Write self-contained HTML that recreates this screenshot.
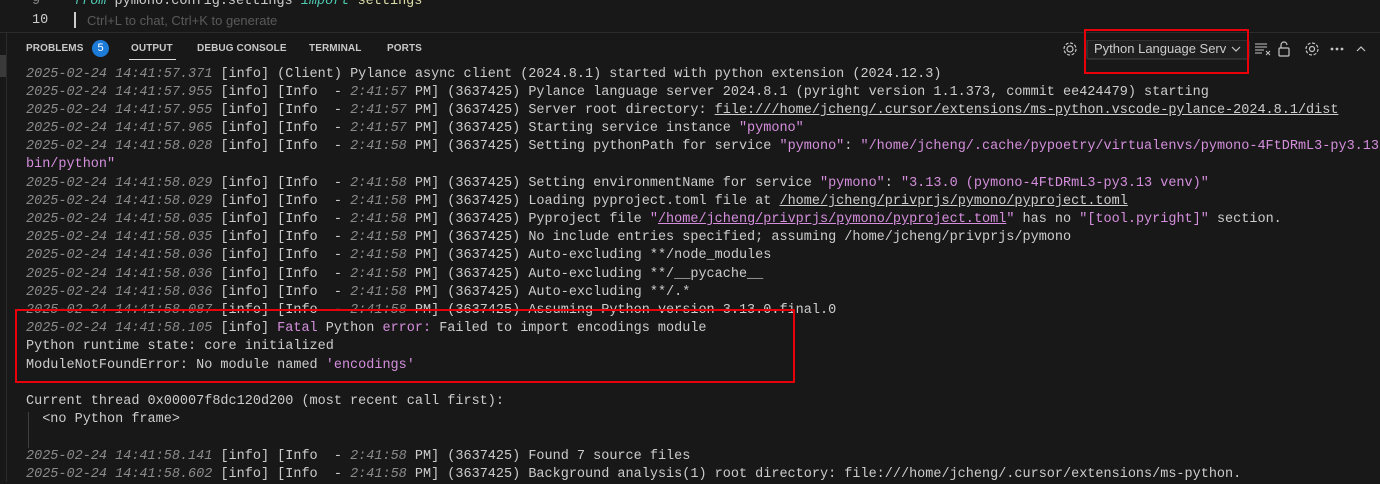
<!DOCTYPE html>
<html><head><meta charset="utf-8">
<style>
html,body{margin:0;padding:0;}
body{width:1380px;height:482px;background:#181818;overflow:hidden;position:relative;font-family:"Liberation Sans",sans-serif;}
.mono{font-family:"Liberation Mono","DejaVu Sans Mono",monospace;font-size:13.5px;color:#cccccc;white-space:pre;}
.ed{position:absolute;left:0;top:0;width:1380px;height:31px;background:#181818;}
.panel{position:absolute;left:0;top:32px;width:1380px;height:450px;border-top:1px solid #2b2b2b;}
.tab{position:absolute;top:43px;font-size:10px;font-weight:bold;color:#c8c8c8;letter-spacing:0.1px;}
.line{position:absolute;left:26px;height:18px;line-height:18px;}
.ts{color:#8b8b8b;font-style:italic;}
.s{color:#d48edc;}
.u{text-decoration:underline;}
.red{position:absolute;border:2px solid #e8000b;box-sizing:border-box;}
</style></head><body>
<div class="ed">
 <div class="mono" style="position:absolute;left:32px;top:-6px;color:#858585;">9</div>
 <div class="mono" style="position:absolute;left:74px;top:-6px;"><span style="color:#4ec9b0;font-style:italic">from</span> pymono.config.settings <span style="color:#4ec9b0;font-style:italic">import</span> <span style="color:#dcdcaa">settings</span></div>
 <div class="mono" style="position:absolute;left:32px;top:13px;color:#cccccc;">10</div>
 <div style="position:absolute;left:74px;top:12px;width:2px;height:16px;background:#ccc;"></div>
 <div style="position:absolute;left:87px;top:13px;font-size:13px;color:#5a5a5a;">Ctrl+L to chat, Ctrl+K to generate</div>
</div>
<div style="position:absolute;left:0;top:55px;width:6px;height:22px;background:#3a3a3a;"></div>
<div style="position:absolute;left:6px;top:32px;width:1px;height:450px;background:#2b2b2b;"></div>
<div class="panel"></div>
<div class="tab" style="left:26px;">PROBLEMS</div>
<div style="position:absolute;left:92px;top:40px;width:17px;height:17px;border-radius:50%;background:#1d7bd8;color:#fff;font-size:11px;text-align:center;line-height:17px;">5</div>
<div class="tab" style="left:131px;">OUTPUT</div>
<div style="position:absolute;left:129px;top:59px;width:47px;height:1px;background:#e0e0e0;"></div>
<div class="tab" style="left:197px;">DEBUG CONSOLE</div>
<div class="tab" style="left:309px;">TERMINAL</div>
<div class="tab" style="left:387px;">PORTS</div>

<svg style="position:absolute;left:1060px;top:40px" width="320" height="20" viewBox="0 0 320 20" fill="none" stroke="#c5c5c5" stroke-width="1.2">
 <circle cx="10" cy="9" r="3"/><circle cx="10" cy="9" r="6" stroke-dasharray="3 1.7"/>
 <rect x="27" y="0" width="162" height="19" rx="2" fill="#1f1f1f" stroke="#3c3c3c"/>
 <path d="M172 7l4 4 4-4"/>
 <path d="M195 4h12M195 7h12M195 10h9M195 13h7M206 11l4 4M210 11l-4 4" stroke-width="1"/>
 <rect x="219" y="8" width="10" height="8" rx="1"/><path d="M221 8V5a3 3 0 0 1 6 0"/>
 <circle cx="252" cy="9" r="2.5"/><circle cx="252" cy="9" r="6" stroke-dasharray="3 1.7"/>
 <circle cx="272" cy="9" r="0.8" fill="#c5c5c5"/><circle cx="277" cy="9" r="0.8" fill="#c5c5c5"/><circle cx="282" cy="9" r="0.8" fill="#c5c5c5"/>
 <path d="M297 11l4-4 4 4"/>
</svg>
<div style="position:absolute;left:1094px;top:41px;font-size:13px;color:#cccccc;width:132px;overflow:hidden;white-space:nowrap;">Python Language Server</div>
<div class="red" style="left:1084px;top:29px;width:165px;height:45px;"></div>

<div class="mono">
<div class="line" style="top:66px"><span class="ts">2025-02-24 14:41:57.371</span> [info] (Client) Pylance async client (2024.8.1) started with python extension (2024.12.3)</div>
<div class="line" style="top:84px"><span class="ts">2025-02-24 14:41:57.955</span> [info] [Info  - <span class="ts">2:41:57</span> PM] (3637425) Pylance language server 2024.8.1 (pyright version 1.1.373, commit ee424479) starting</div>
<div class="line" style="top:102px"><span class="ts">2025-02-24 14:41:57.955</span> [info] [Info  - <span class="ts">2:41:57</span> PM] (3637425) Server root directory: <span class="u">file:///home/jcheng/.cursor/extensions/ms-python.vscode-pylance-2024.8.1/dist</span></div>
<div class="line" style="top:120px"><span class="ts">2025-02-24 14:41:57.965</span> [info] [Info  - <span class="ts">2:41:57</span> PM] (3637425) Starting service instance <span class="s">"pymono"</span></div>
<div class="line" style="top:138px"><span class="ts">2025-02-24 14:41:58.028</span> [info] [Info  - <span class="ts">2:41:58</span> PM] (3637425) Setting pythonPath for service <span class="s">"pymono"</span>: <span class="s">"/home/jcheng/.cache/pypoetry/virtualenvs/pymono-4FtDRmL3-py3.13/</span></div>
<div class="line" style="top:156px"><span class="s">bin/python"</span></div>
<div class="line" style="top:175px"><span class="ts">2025-02-24 14:41:58.029</span> [info] [Info  - <span class="ts">2:41:58</span> PM] (3637425) Setting environmentName for service <span class="s">"pymono"</span>: <span class="s">"3.13.0 (pymono-4FtDRmL3-py3.13 venv)"</span></div>
<div class="line" style="top:193px"><span class="ts">2025-02-24 14:41:58.029</span> [info] [Info  - <span class="ts">2:41:58</span> PM] (3637425) Loading pyproject.toml file at <span class="u">/home/jcheng/privprjs/pymono/pyproject.toml</span></div>
<div class="line" style="top:211px"><span class="ts">2025-02-24 14:41:58.035</span> [info] [Info  - <span class="ts">2:41:58</span> PM] (3637425) Pyproject file <span class="s">"<span class="u">/home/jcheng/privprjs/pymono/pyproject.toml</span>"</span> has no <span class="s">"[tool.pyright]"</span> section.</div>
<div class="line" style="top:229px"><span class="ts">2025-02-24 14:41:58.035</span> [info] [Info  - <span class="ts">2:41:58</span> PM] (3637425) No include entries specified; assuming /home/jcheng/privprjs/pymono</div>
<div class="line" style="top:247px"><span class="ts">2025-02-24 14:41:58.036</span> [info] [Info  - <span class="ts">2:41:58</span> PM] (3637425) Auto-excluding **/node_modules</div>
<div class="line" style="top:266px"><span class="ts">2025-02-24 14:41:58.036</span> [info] [Info  - <span class="ts">2:41:58</span> PM] (3637425) Auto-excluding **/__pycache__</div>
<div class="line" style="top:284px"><span class="ts">2025-02-24 14:41:58.036</span> [info] [Info  - <span class="ts">2:41:58</span> PM] (3637425) Auto-excluding **/.*</div>
<div class="line" style="top:302px"><span class="ts">2025-02-24 14:41:58.087</span> [info] [Info  - <span class="ts">2:41:58</span> PM] (3637425) Assuming Python version 3.13.0.final.0</div>
<div class="line" style="top:320px"><span class="ts">2025-02-24 14:41:58.105</span> [info] <span class="s">Fatal</span> Python <span class="s">error:</span> Failed to import encodings module</div>
<div class="line" style="top:338px">Python runtime state: core initialized</div>
<div class="line" style="top:357px">ModuleNotFoundError: No module named <span class="s">'encodings'</span></div>
<div class="line" style="top:393px">Current thread 0x00007f8dc120d200 (most recent call first):</div>
<div class="line" style="top:411px">  &lt;no Python frame&gt;</div>
<div class="line" style="top:448px"><span class="ts">2025-02-24 14:41:58.141</span> [info] [Info  - <span class="ts">2:41:58</span> PM] (3637425) Found 7 source files</div>
<div class="line" style="top:466px"><span class="ts">2025-02-24 14:41:58.602</span> [info] [Info  - <span class="ts">2:41:58</span> PM] (3637425) Background analysis(1) root directory: file:///home/jcheng/.cursor/extensions/ms-python.</div>
</div>
<div style="position:absolute;left:28px;top:412px;width:1px;height:36px;background:#404040;"></div>
<div class="red" style="left:15px;top:309px;width:780px;height:74px;"></div>
</body></html>
